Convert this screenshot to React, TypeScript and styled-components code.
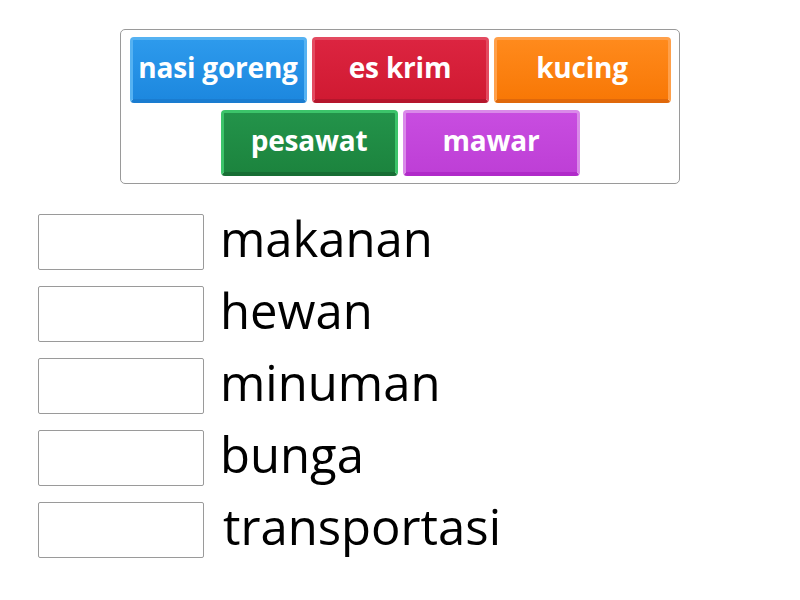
import React from "react";
import styled, { createGlobalStyle } from "styled-components";

const Global = createGlobalStyle`
  html, body { margin: 0; padding: 0; background: #fff; }
  body { font-family: "Open Sans", "Noto Sans", sans-serif; }
`;

const Page = styled.div`
  width: 800px;
  height: 600px;
  padding-top: 29px;
  box-sizing: border-box;
`;

const Tray = styled.div`
  margin-left: 120px;
  width: 560px;
  height: 155px;
  box-sizing: border-box;
  border: 1px solid #9a9a9a;
  border-radius: 5px;
  padding: 7px 8px;
  display: flex;
  flex-wrap: wrap;
  justify-content: center;
  align-content: flex-start;
  gap: 7px 5px;
`;

type Palette = { top: string; face: string; edge: string; dark: string };

const palettes: Record<string, Palette> = {
  blue: { top: "#2d9aec", face: "#1d88df", edge: "#55b2f2", dark: "#1a7cd0" },
  red: { top: "#dc2440", face: "#d01a32", edge: "#e34a60", dark: "#b5162c" },
  orange: { top: "#ff8a1c", face: "#f87806", edge: "#ffa04a", dark: "#e0680a" },
  green: { top: "#23934a", face: "#1c843e", edge: "#3cc46a", dark: "#176e34" },
  purple: { top: "#c84de0", face: "#be3fd6", edge: "#da8ae9", dark: "#b02ac9" },
};

const Tile = styled.div<{ $p: Palette }>`
  width: 177px;
  height: 66px;
  box-sizing: border-box;
  border-radius: 4px;
  border: 3px solid ${(p) => p.$p.edge};
  border-bottom: 4px solid ${(p) => p.$p.dark};
  background: linear-gradient(${(p) => p.$p.top}, ${(p) => p.$p.face});
  display: flex;
  align-items: center;
  justify-content: center;
  padding-bottom: 5px;
  color: #fff;
  font-family: "Open Sans", sans-serif;
  font-weight: 700;
  font-size: 28px;
  letter-spacing: -0.2px;
  white-space: nowrap;
  overflow: hidden;
`;

const List = styled.div`
  margin-top: 30px;
  margin-left: 38px;
  display: flex;
  flex-direction: column;
  gap: 16px;
`;

const Row = styled.div`
  display: flex;
  align-items: center;
  gap: 16px;
  height: 56px;
`;

const Slot = styled.div`
  width: 166px;
  height: 56px;
  box-sizing: border-box;
  border: 1px solid #9a9a9a;
  border-radius: 2px;
  background: #fff;
`;

const Label = styled.div<{ $indent?: number }>`
  font-family: "Open Sans", sans-serif;
  font-size: 49px;
  line-height: 56px;
  color: #000;
  margin-top: -8px;
  margin-left: ${(p) => p.$indent ?? 0}px;
`;

const tiles = [
  { text: "nasi goreng", c: "blue" },
  { text: "es krim", c: "red" },
  { text: "kucing", c: "orange" },
  { text: "pesawat", c: "green" },
  { text: "mawar", c: "purple" },
];

const labels = [
  { text: "makanan" },
  { text: "hewan" },
  { text: "minuman" },
  { text: "bunga" },
  { text: "transportasi", indent: 3 },
];

export default function App() {
  return (
    <Page>
      <Global />
      <Tray>
        {tiles.map((t) => (
          <Tile key={t.text} $p={palettes[t.c]}>
            {t.text}
          </Tile>
        ))}
      </Tray>
      <List>
        {labels.map((l) => (
          <Row key={l.text}>
            <Slot />
            <Label $indent={l.indent}>{l.text}</Label>
          </Row>
        ))}
      </List>
    </Page>
  );
}
